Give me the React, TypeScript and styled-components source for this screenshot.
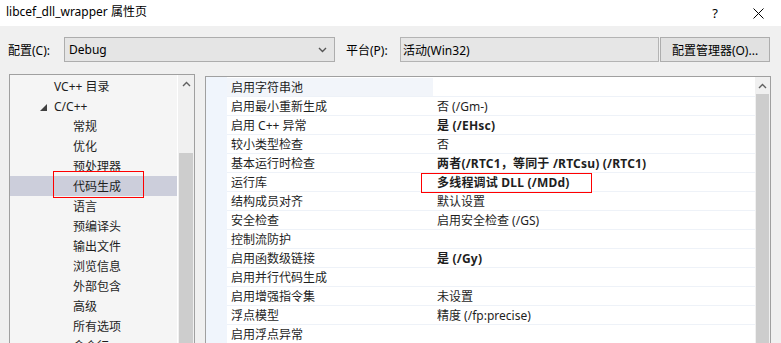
import React from "react";
import styled, { createGlobalStyle } from "styled-components";

const Global = createGlobalStyle`
  html, body { margin: 0; padding: 0; }
  body {
    width: 781px; height: 343px; overflow: hidden;
    background: #f0f0f0;
    font-family: "Noto Sans", "Noto Sans CJK SC", sans-serif;
    font-size: 12px; color: #000;
  }
`;

const Window = styled.div`
  width: 781px; height: 343px; display: flex; flex-direction: column; overflow: hidden;
  background: #f0f0f0;
`;

const TitleBar = styled.div`
  height: 26px; background: #fff; display: flex; align-items: center;
  padding-left: 6px; box-sizing: border-box;
`;
const Title = styled.div`
  flex: 1; font-size: 12px; color: #000; line-height: 16px; padding-bottom: 2px;
`;
const TitleBtn = styled.div<{ $w: number }>`
  width: ${(p) => p.$w}px; height: 26px; display: flex; align-items: center; justify-content: center;
  color: #000; font-size: 13px;
`;

const Toolbar = styled.div`
  height: 48px; box-sizing: border-box; padding: 11px 0 0 8px;
  display: grid; grid-template-columns: 56px 271px 11px 54px 259px 1px 110px; align-items: start;
`;
const Label = styled.div`
  height: 25px; display: flex; align-items: center; font-size: 12px;
`;
const Combo = styled.div`
  height: 25px; box-sizing: border-box; border: 1px solid #adadad; background: #e5e5e5;
  display: flex; align-items: center; padding: 0 7px 0 4px; font-size: 12px;
`;
const ComboText = styled.span` flex: 1; `;
const Field = styled.div`
  height: 25px; box-sizing: border-box; border: 1px solid #b4b4b4; background: #e6e6e6;
  display: flex; align-items: center; padding-left: 2px; font-size: 12px;
`;
const Button = styled.div`
  height: 25px; box-sizing: border-box; border: 1px solid #adadad; background: #e1e1e1;
  display: flex; align-items: center; justify-content: center; font-size: 12px;
`;

const Main = styled.div`
  flex: 1; display: flex; padding-left: 9px; gap: 10px; min-height: 0;
`;

const TreePanel = styled.div`
  position: relative; margin-top: 0; width: 186px; height: 290px; box-sizing: border-box;
  border: 1px solid #a0a0a0; border-bottom: none; background: #f5f5f5; display: flex;
`;
const TreeBody = styled.div`
  flex: 1; padding-top: 1px; border-right: 1px solid #ffffff;
`;
const TreeRow = styled.div<{ $indent: number; $sel?: boolean }>`
  height: 20px; display: flex; align-items: center; box-sizing: border-box;
  padding-left: ${(p) => p.$indent}px; background: ${(p) => (p.$sel ? "#cccedb" : "transparent")};
  color: #1e1e1e; white-space: nowrap;
`;
const Expander = styled.span`
  width: 14px; display: inline-flex; align-items: center; margin-left: -14px; padding-top: 2px;
`;

const ScrollBar = styled.div<{ $w: number }>`
  width: ${(p) => p.$w}px; background: #f0f0f0; display: flex; flex-direction: column; align-items: stretch;
`;
const ScrollArrow = styled.div`
  height: 17px; display: flex; align-items: center; justify-content: center;
`;
const ScrollThumb = styled.div<{ $top: number }>`
  margin-top: ${(p) => p.$top}px; flex: 1; background: #cdcdcd; margin-left: 1px; margin-right: 1px;
`;

const GridPanel = styled.div`
  position: relative; margin-top: 2px; width: 566px; height: 290px; box-sizing: border-box;
  border: 1px solid #a0a0a0; border-bottom: none; background: #fff; display: flex;
`;
const Strip = styled.div`
  width: 21px; background: #f0f5fc;
`;
const GridBody = styled.div`
  flex: 1; padding-top: 1px;
`;
const GridRow = styled.div`
  height: 19px; box-sizing: border-box; display: grid; grid-template-columns: 206px 1fr;
  border-bottom: 1px solid #eef2f8;
`;
const NameCell = styled.div<{ $shade?: boolean }>`
  display: flex; align-items: center; padding-left: 4px; background: ${(p) => (p.$shade ? "#f2f5fa" : "#fff")};
  white-space: nowrap; color: #1e1e1e;
`;
const ValueCell = styled.div<{ $bold?: boolean }>`
  display: flex; align-items: center; padding-left: 4px; white-space: nowrap;
  font-weight: ${(p) => (p.$bold ? 700 : 400)}; color: #1e1e1e;
  letter-spacing: ${(p) => (p.$bold ? "0.2px" : "0")};
`;

const Mark = styled.div<{ $x: number; $y: number; $w: number; $h: number }>`
  position: absolute; left: ${(p) => p.$x}px; top: ${(p) => p.$y}px; width: ${(p) => p.$w}px; height: ${(p) => p.$h}px;
  box-sizing: border-box; border: 1px solid #ff0000; pointer-events: none; z-index: 2;
`;

const Chevron = ({ up }: { up?: boolean }) => (
  <svg width="9" height="6" viewBox="0 0 9 6">
    <path d={up ? "M1 5 L4.5 1.5 L8 5" : "M1 1 L4.5 4.5 L8 1"} fill="none" stroke={up ? "#606060" : "#555"} strokeWidth="1.4" />
  </svg>
);

const tree: { label: string; indent: number; exp?: boolean; sel?: boolean }[] = [
  { label: "VC++ 目录", indent: 44 },
  { label: "C/C++", indent: 44, exp: true },
  { label: "常规", indent: 63 },
  { label: "优化", indent: 63 },
  { label: "预处理器", indent: 63 },
  { label: "代码生成", indent: 63, sel: true },
  { label: "语言", indent: 63 },
  { label: "预编译头", indent: 63 },
  { label: "输出文件", indent: 63 },
  { label: "浏览信息", indent: 63 },
  { label: "外部包含", indent: 63 },
  { label: "高级", indent: 63 },
  { label: "所有选项", indent: 63 },
  { label: "命令行", indent: 63 },
];

const rows: { name: string; value: string; bold?: boolean }[] = [
  { name: "启用字符串池", value: "" },
  { name: "启用最小重新生成", value: "否 (/Gm-)" },
  { name: "启用 C++ 异常", value: "是 (/EHsc)", bold: true },
  { name: "较小类型检查", value: "否" },
  { name: "基本运行时检查", value: "两者(/RTC1，等同于 /RTCsu) (/RTC1)", bold: true },
  { name: "运行库", value: "多线程调试 DLL (/MDd)", bold: true },
  { name: "结构成员对齐", value: "默认设置" },
  { name: "安全检查", value: "启用安全检查 (/GS)" },
  { name: "控制流防护", value: "" },
  { name: "启用函数级链接", value: "是 (/Gy)", bold: true },
  { name: "启用并行代码生成", value: "" },
  { name: "启用增强指令集", value: "未设置" },
  { name: "浮点模型", value: "精度 (/fp:precise)" },
  { name: "启用浮点异常", value: "" },
];

export default function App() {
  return (
    <Window>
      <Global />
      <TitleBar>
        <Title>libcef_dll_wrapper 属性页</Title>
        <TitleBtn $w={40}>?</TitleBtn>
        <TitleBtn $w={46}>
          <svg width="11" height="11" viewBox="0 0 11 11">
            <path d="M0.5 0.5 L10.5 10.5 M10.5 0.5 L0.5 10.5" stroke="#000" strokeWidth="1" />
          </svg>
        </TitleBtn>
      </TitleBar>
      <Toolbar>
        <Label>配置(C):</Label>
        <Combo>
          <ComboText>Debug</ComboText>
          <Chevron />
        </Combo>
        <span />
        <Label>平台(P):</Label>
        <Field>活动(Win32)</Field>
        <span />
        <Button>配置管理器(O)...</Button>
      </Toolbar>
      <Main>
        <TreePanel>
          <TreeBody>
            {tree.map((t) => (
              <TreeRow key={t.label} $indent={t.indent} $sel={t.sel}>
                {t.exp && (
                  <Expander>
                    <svg width="7" height="7" viewBox="0 0 7 7">
                      <polygon points="0,7 7,7 7,0" fill="#404040" />
                    </svg>
                  </Expander>
                )}
                {t.label}
              </TreeRow>
            ))}
          </TreeBody>
          <ScrollBar $w={16}>
            <ScrollArrow><Chevron up /></ScrollArrow>
            <ScrollThumb $top={61} />
          </ScrollBar>
          <Mark $x={43} $y={96} $w={91} $h={27} />
        </TreePanel>
        <GridPanel>
          <Strip />
          <GridBody>
            {rows.map((r, i) => (
              <GridRow key={r.name}>
                <NameCell $shade={i === 0}>{r.name}</NameCell>
                <ValueCell $bold={r.bold}>{r.value}</ValueCell>
              </GridRow>
            ))}
          </GridBody>
          <ScrollBar $w={15}>
            <ScrollArrow><Chevron up /></ScrollArrow>
            <ScrollThumb $top={0} />
          </ScrollBar>
          <Mark $x={215} $y={96} $w={171} $h={20} />
        </GridPanel>
      </Main>
    </Window>
  );
}
